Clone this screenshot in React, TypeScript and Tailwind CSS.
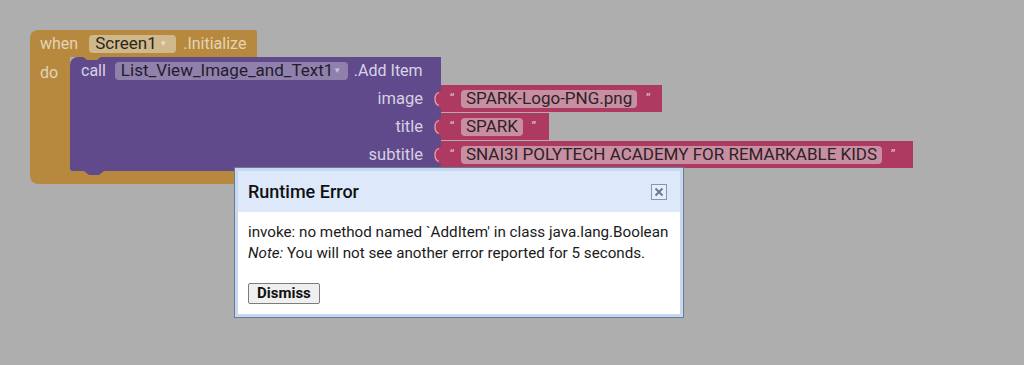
import React from "react";

const ORANGE = "bg-[#b7893f]";
const PURPLE = "bg-[#604a8b]";
const PINK = "bg-[#ae3a62]";

function Tab() {
  return (
    <svg width="9" height="16" viewBox="0 0 9 16" className="-ml-[8px] shrink-0">
      <path d="M9 0 L9 16 L7 16 C3 16 1 13 1 8 C1 3 3 0 7 0 Z" fill="#ae3a62" />
      <path d="M6 1.5 C3 2.5 2 5 2 8 C2 11 3 13.5 6 14.5" stroke="#d9a9bb" strokeWidth="1.2" fill="none" />
    </svg>
  );
}

function Row({ label, value, w }: { label: string; value: string; w: string }) {
  return (
    <div className="flex h-[28px] items-stretch">
      <div className={`w-[371px] ${PURPLE} flex items-center justify-end pr-[18px] text-[16.5px] text-[#d8d0e4]`}>{label}</div>
      <div className={`h-[27px] ${PINK} ${w} flex items-center`}>
        <Tab />
        <span className="ml-[4px] text-[13px] text-[#dcc0cb] w-[12px] text-center leading-none">“</span>
        <span className="ml-[3px] h-[18px] rounded-[4px] bg-[#c88fa2] px-[5px] flex items-center text-[17px] text-[#2d2226] whitespace-nowrap">{value}</span>
        <span className="ml-[5px] text-[13px] text-[#dcc0cb] w-[12px] text-center leading-none">”</span>
      </div>
    </div>
  );
}

export default function App() {
  return (
    <div
      className="relative w-[1024px] h-[365px] overflow-hidden bg-[#aeaeae] pl-[30px] pt-[30px]"
      style={{ fontFamily: "Roboto, 'Liberation Sans', Arial, sans-serif" }}
    >
      <div className="flex flex-col items-start">
        {/* header */}
        <div className={`w-[227px] h-[27px] ${ORANGE} rounded-tl-[8px] rounded-tr-[2px] flex items-center pl-[10px] text-[16px] text-[#e3d4b6]`}>
          <span>when</span>
          <span className="ml-[11px] h-[18px] w-[87px] rounded-[4px] bg-[#cfb98c] flex items-center pl-[6px] text-[17px] text-[#2c2619]">
            Screen1
            <span className="ml-auto mr-[9px] text-[8px] text-[#e8dcc3]">▼</span>
          </span>
          <span className="ml-[7px]">.Initialize</span>
        </div>
        {/* body */}
        <div className="flex">
          <div className={`w-[40px] ${ORANGE} pl-[10px] pt-[4px] text-[16px] text-[#e3d4b6]`}>do</div>
          <div className="relative flex flex-col">
            <svg width="20" height="5" viewBox="0 0 20 5" className="absolute left-[12px] -top-[1px]">
              <path d="M0 0 L5 4 L15 4 L20 0 Z" fill="#b7893f" />
            </svg>
            <div className={`w-[371px] h-[28px] ${PURPLE} rounded-tl-[8px] flex items-center pl-[11px] text-[16px] text-[#d9d2e6]`}>
              <span>call</span>
              <span className="ml-[9px] h-[18px] w-[233px] rounded-[4px] bg-[#8f81ab] flex items-center pl-[6px] text-[17px] text-[#231c2e]">
                List_View_Image_and_Text1
                <span className="ml-auto mr-[9px] text-[8px] text-[#c9c0da]">▼</span>
              </span>
              <span className="ml-[6px]">.Add Item</span>
            </div>
            <Row label="image" value="SPARK-Logo-PNG.png" w="w-[221px]" />
            <Row label="title" value="SPARK" w="w-[108px]" />
            <Row label="subtitle" value="SNAI3I POLYTECH ACADEMY FOR REMARKABLE KIDS" w="w-[472px]" />
            <div className={`relative w-[371px] h-[2px] ${PURPLE} rounded-bl-[8px]`}>
              <svg width="20" height="5" viewBox="0 0 20 5" className="absolute left-[14px] top-[2px]">
                <path d="M0 0 L5 4 L15 4 L20 0 Z" fill="#604a8b" />
              </svg>
            </div>
          </div>
        </div>
        <div className={`w-[227px] h-[13px] ${ORANGE} rounded-b-[8px]`} />
      </div>

      {/* dialog */}
      <div className="absolute left-[234px] top-[167px] w-[450px] h-[151px] border border-[#6f7a8c] bg-[#c6d9f3] p-[3px] flex flex-col">
        <div className="h-[41px] bg-[#dde9fa] flex items-center pl-[10px] pr-[13px]">
          <span className="text-[18px] font-medium text-[#111]">Runtime Error</span>
          <span className="ml-auto w-[16px] h-[16px] border border-[#8896ad] bg-[#e6eefb] flex items-center justify-center">
            <svg width="10" height="10" viewBox="0 0 10 10">
              <path d="M1.5 1.5 L8.5 8.5 M8.5 1.5 L1.5 8.5" stroke="#6b7a96" strokeWidth="2" />
            </svg>
          </span>
        </div>
        <div className="flex-1 bg-white pl-[10px] pt-[10px] text-[15.2px] leading-[21px] text-[#1a1a1a]">
          <div className="whitespace-nowrap">invoke: no method named `AddItem' in class java.lang.Boolean</div>
          <div className="whitespace-nowrap">
            <i>Note:</i> You will not see another error reported for 5 seconds.
          </div>
          <button className="mt-[19px] h-[21px] px-[8px] border border-[#7c7c7c] rounded-[2px] bg-[#efefef] text-[15px] font-bold text-[#111] leading-none">
            Dismiss
          </button>
        </div>
      </div>
    </div>
  );
}
